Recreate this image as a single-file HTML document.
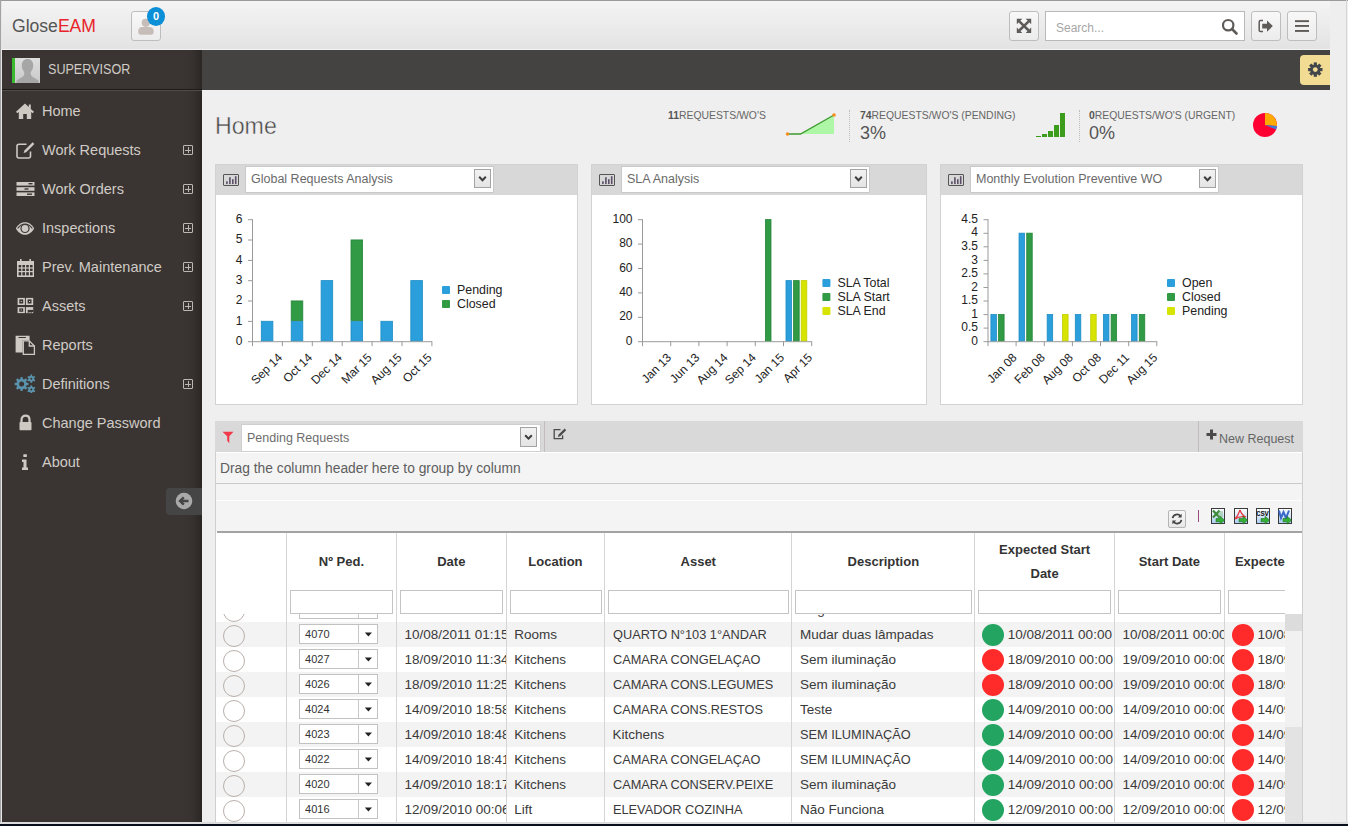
<!DOCTYPE html>
<html><head><meta charset="utf-8">
<style>
*{box-sizing:border-box;margin:0;padding:0}
html,body{width:1348px;height:826px;overflow:hidden}
body{position:relative;background:#efefef;font-family:"Liberation Sans",sans-serif;color:#444}
.abs{position:absolute}
#frameTop{left:0;top:0;width:1348px;height:1px;background:#9a9a9a}
#frameL1{left:0;top:0;width:1px;height:824px;background:#a3a3a3}
#frameL2{left:1px;top:1px;width:1px;height:822px;background:#e6e6e6}
#frameR{left:1346px;top:0;width:1px;height:824px;background:#d6d6d6}
#frameB1{left:0;top:822px;width:1348px;height:2px;background:#dcdcdc}
#frameB2{left:0;top:824px;width:1348px;height:2px;background:#0a0f1c}
#header{left:2px;top:1px;width:1328px;height:49px;background:linear-gradient(#f4f4f4,#e3e3e3);border-bottom:1px solid #f3f3f3}
#logo{left:9.5px;top:14px;font-size:18.9px;color:#555;letter-spacing:0;transform:scaleX(0.93);transform-origin:0 0;white-space:nowrap}
#logo span{color:#e8232a}
.hbtn{position:absolute;width:30px;height:30px;border:1px solid #bdbdbd;border-radius:3px;background:linear-gradient(#f8f8f8,#ececec)}
#topbar{left:202px;top:50px;width:1128px;height:40px;background:#454341}
#sidebar{left:2px;top:50px;width:200px;height:772px;background:#3a3532;box-shadow:inset -14px 0 12px -10px rgba(0,0,0,.35)}
#userbar{left:2px;top:50px;width:200px;height:41px;border-bottom:1px solid #4f4c4a}
#userbar:after{content:"";position:absolute;left:0;top:39px;width:200px;height:1px;background:#1c1917}
.mi{position:absolute;left:0;width:200px;height:39px;color:#d0cbc6;font-size:14.5px}
.mi .t{position:absolute;left:40px;top:12px}
.mi svg.ic{position:absolute;left:13px;top:11px}
.mi .plus{position:absolute;left:181px;top:15px;width:9.5px;height:9.5px;border:1px solid #bdb7b2;border-radius:1px}
.mi .plus:before{content:"";position:absolute;left:1px;top:3.5px;width:6px;height:1px;background:#bdb7b2}
.mi .plus:after{content:"";position:absolute;left:3.5px;top:1px;width:1px;height:6px;background:#bdb7b2}

.panel{position:absolute;background:#fff;border:1px solid #d2d2d2}
.phead{position:absolute;left:0;top:0;right:0;height:30px;background:#d8d8d8}
.sel{position:absolute;background:#fff;border:1px solid #c9c9c9;font-size:12.5px;color:#6a6a6a}
.sel .tx{position:absolute;left:5px;top:5px;white-space:nowrap}
.ddb{position:absolute;width:17px;height:19px;border:1px solid #a3a3a3;background:linear-gradient(#f2f2f2,#e4e4e4)}
.chi{position:absolute;left:7px;top:9px;width:15.5px;height:12px;border:1.1px solid #555;border-radius:1px}
.kpi{position:absolute;font-size:10.4px;color:#666;white-space:nowrap}
.kpi b{color:#555}
.kpv{position:absolute;font-size:18px;color:#555}
.hdt{font-size:13px;font-weight:bold;color:#333;text-align:center}
.cell{font-size:13.5px;color:#3a3a3a;white-space:nowrap;overflow:hidden}
</style></head><body>
<div id="frameTop" class="abs"></div>
<div id="header" class="abs">
  <div id="logo" class="abs">Glose<span>EAM</span></div>
</div>
<div class="hbtn" style="left:131px;top:11px;width:30px;height:30px">
  <svg width="28" height="28" style="position:absolute;left:0;top:0" viewBox="0 0 28 28"><circle cx="13.8" cy="10.8" r="4.1" fill="#c6bdb8"/><path d="M6.2 19.5 C6.2 16.5 7.8 15.1 10.5 15.1 H17.2 C20 15.1 21.7 16.5 21.7 19.5 C21.7 21.8 20.8 22.8 19 22.8 H9 C7.2 22.8 6.2 21.8 6.2 19.5 Z" fill="#c6bdb8"/></svg>
</div>
<div class="abs" style="left:147px;top:7px;width:18px;height:18.5px;border-radius:50%;background:#0b8fd6;color:#fff;font-size:11px;font-weight:bold;text-align:center;line-height:18.5px">0</div>
<div class="hbtn" style="left:1009px;top:11px;width:30px;height:30px">
  <svg width="28" height="28" viewBox="0 0 28 28" style="position:absolute;left:0;top:0"><g fill="#5e5a58"><path d="M6.8 6.8 H12.3 L6.8 12.3 Z"/><path d="M21.2 6.8 H15.7 L21.2 12.3 Z"/><path d="M6.8 21 H12.3 L6.8 15.5 Z"/><path d="M21.2 21 H15.7 L21.2 15.5 Z"/></g><path d="M9.3 9.3 L18.7 18.5 M18.7 9.3 L9.3 18.5" stroke="#5e5a58" stroke-width="2.5"/></svg>
</div>
<div class="abs" style="left:1045px;top:11px;width:200px;height:30px;background:#fff;border:1px solid #b9b9b9">
  <div class="abs" style="left:10px;top:9px;font-size:12px;color:#a7a7a7">Search...</div>
  <svg width="18" height="18" viewBox="0 0 18 18" style="position:absolute;left:175px;top:6px"><circle cx="7.2" cy="7.2" r="5.2" fill="none" stroke="#5e5a58" stroke-width="2.2"/><path d="M11 11 L15.5 15.5" stroke="#5e5a58" stroke-width="2.6" stroke-linecap="round"/></svg>
</div>
<div class="hbtn" style="left:1251px;top:11px;width:30px;height:30px">
  <svg width="28" height="28" viewBox="0 0 28 28" style="position:absolute;left:0;top:0"><path d="M11 8.6 H8.6 C7.7 8.6 7.2 9.1 7.2 10 V18.2 C7.2 19.1 7.7 19.6 8.6 19.6 H11" fill="none" stroke="#5e5a58" stroke-width="1.5"/><path d="M10.2 11.8 H15 V8.4 L20.8 14.1 L15 19.8 V16.4 H10.2 Z" fill="#5e5a58"/></svg>
</div>
<div class="hbtn" style="left:1287px;top:11px;width:30px;height:30px">
  <svg width="28" height="28" viewBox="0 0 28 28" style="position:absolute;left:0;top:0"><g fill="#5e5a58"><rect x="7" y="8.2" width="14" height="1.9"/><rect x="7" y="13" width="14" height="1.9"/><rect x="7" y="18" width="14" height="1.9"/></g></svg>
</div>
<div id="rstrip" class="abs" style="left:1330px;top:1px;width:16px;height:821px;background:#eeeeee"></div>
<div id="topbar" class="abs"></div>
<div id="sidebar" class="abs"></div>
<div id="userbar" class="abs">
  <div class="abs" style="left:10px;top:8px;width:3px;height:25px;background:#3cb92f"></div>
  <div class="abs" style="left:13px;top:8px;width:25px;height:25px;background:linear-gradient(#dedede,#c9c9c9);overflow:hidden">
    <svg width="25" height="25" viewBox="0 0 25 25"><path d="M12.5 1 C16 1 18.2 3.5 18.2 7.5 C18.2 10.5 17 12.5 15.8 14 C15.5 15.5 15.8 17.5 17 18.5 L23.5 22.5 V25 H1.5 V22.5 L8 18.5 C9.2 17.5 9.5 15.5 9.2 14 C8 12.5 6.8 10.5 6.8 7.5 C6.8 3.5 9 1 12.5 1 Z" fill="#a6a6a6"/></svg>
  </div>
  <div class="abs" style="left:46px;top:11px;font-size:14.3px;color:#d0cbc6;transform:scaleX(0.88);transform-origin:0 0">SUPERVISOR</div>
</div>
<div class="abs" style="left:2px;top:91px;width:200px;height:420px">
<div class="mi" style="top:0px"><svg class="ic" width="20" height="18" viewBox="0 0 20 18"><path d="M10 1.5 L1 9.8 L2.3 11.2 L3.8 9.9 V17 H8.2 V12 H11.8 V17 H16.2 V9.9 L17.7 11.2 L19 9.8 L15.8 6.9 V2.5 H13.8 V5.1 Z" fill="#cfc9c4"/></svg><div class="t">Home</div></div>
<div class="mi" style="top:39px"><svg class="ic" width="20" height="18" viewBox="0 0 20 18"><path d="M11.5 3.3 H4 C2.8 3.3 2 4.1 2 5.3 V15 C2 16.2 2.8 17 4 17 H13.5 C14.7 17 15.5 16.2 15.5 15 V10.5" fill="none" stroke="#cfc9c4" stroke-width="1.6"/><path d="M17.6 1.2 L19.4 3 L11.2 11.2 L8.6 12 L9.4 9.4 Z" fill="#cfc9c4"/></svg><div class="t">Work Requests</div><div class="plus"></div></div>
<div class="mi" style="top:78px"><svg class="ic" width="20" height="18" viewBox="0 0 20 18"><g fill="#cfc9c4"><rect x="1.5" y="2" width="18" height="3.6"/><rect x="1.5" y="7.2" width="18" height="3.6"/><rect x="1.5" y="12.4" width="18" height="3.6"/></g><g fill="#3a3532"><rect x="13.5" y="3" width="4" height="1.4"/><rect x="9.5" y="8.3" width="4" height="1.4"/><rect x="12" y="13.5" width="5" height="1.4"/></g></svg><div class="t">Work Orders</div><div class="plus"></div></div>
<div class="mi" style="top:117px"><svg class="ic" width="20" height="18" viewBox="0 0 20 18"><path d="M0.8 9.5 C3.5 4.8 6.8 3.3 10 3.3 C13.2 3.3 16.5 4.8 19.2 9.5 C16.5 14.2 13.2 15.7 10 15.7 C6.8 15.7 3.5 14.2 0.8 9.5 Z" fill="#cfc9c4"/><circle cx="10" cy="9.5" r="4.6" fill="#3a3532"/><circle cx="10" cy="9.5" r="3.4" fill="#cfc9c4"/><path d="M2.6 9.5 C5 6 7.5 5 10 5 C12.5 5 15 6 17.4 9.5" fill="none" stroke="#3a3532" stroke-width="1.1"/></svg><div class="t">Inspections</div><div class="plus"></div></div>
<div class="mi" style="top:156px"><svg class="ic" width="20" height="20" viewBox="0 0 20 20" style="top:10.5px"><rect x="2" y="3" width="17" height="16" fill="#cfc9c4"/><g fill="#3a3532"><rect x="3.6" y="7" width="2.6" height="2.4"/><rect x="7.4" y="7" width="2.6" height="2.4"/><rect x="11.2" y="7" width="2.6" height="2.4"/><rect x="15" y="7" width="2.6" height="2.4"/><rect x="3.6" y="10.6" width="2.6" height="2.4"/><rect x="7.4" y="10.6" width="2.6" height="2.4"/><rect x="11.2" y="10.6" width="2.6" height="2.4"/><rect x="15" y="10.6" width="2.6" height="2.4"/><rect x="3.6" y="14.2" width="2.6" height="3.2"/><rect x="7.4" y="14.2" width="2.6" height="3.2"/><rect x="11.2" y="14.2" width="2.6" height="3.2"/><rect x="15" y="14.2" width="2.6" height="3.2"/></g><g fill="#cfc9c4"><rect x="5" y="1" width="1.6" height="3"/><rect x="14.4" y="1" width="1.6" height="3"/></g></svg><div class="t">Prev. Maintenance</div><div class="plus"></div></div>
<div class="mi" style="top:195px"><svg class="ic" width="20" height="18" viewBox="0 0 20 18"><g fill="#cfc9c4"><rect x="2.6" y="0.9" width="7.3" height="7.1"/><rect x="10.9" y="0.9" width="7.3" height="7.1"/><rect x="2.6" y="10.1" width="7.3" height="6"/><rect x="10.9" y="10.1" width="7.3" height="6"/></g><g fill="#3a3532"><rect x="4.3" y="2.4" width="3.9" height="4.1"/><rect x="12.6" y="2.4" width="3.9" height="4.1"/><rect x="4.3" y="11.4" width="3.9" height="3.4"/><rect x="12.7" y="12.9" width="5.5" height="3.2"/></g><g fill="#cfc9c4"><rect x="5.7" y="4" width="1.1" height="1"/><rect x="14" y="4" width="1.1" height="1"/><rect x="5.7" y="12.6" width="1.1" height="1"/><rect x="13.6" y="15" width="1" height="1.1"/><rect x="15.4" y="15" width="1" height="1.1"/><rect x="17.1" y="15" width="1" height="1.1"/></g></svg><div class="t">Assets</div><div class="plus"></div></div>
<div class="mi" style="top:234px"><svg class="ic" width="22" height="24" viewBox="0 0 22 24" style="top:8px"><path d="M0.6 2.8 H14.6 V7.2 H7.7 V19.5 H0.6 Z" fill="#cfc9c4"/><rect x="3.4" y="3.9" width="7.6" height="1" rx="0.5" fill="#3a3532"/><path d="M8.3 7.8 H14.3 L19.4 13 V21.4 H8.3 Z" fill="none" stroke="#cfc9c4" stroke-width="1.3"/><path d="M14.3 7.8 V13 H19.4" fill="none" stroke="#cfc9c4" stroke-width="1.3"/></svg><div class="t">Reports</div></div>
<div class="mi" style="top:273px"><svg class="ic" width="22" height="20" viewBox="0 0 22 20" style="left:12px;top:9px"><g transform="translate(7.60 11.00)"><circle r="5.20" fill="#5a93ad"/><rect x="-1.15" y="-6.90" width="2.30" height="2.50" fill="#5a93ad" transform="rotate(0.0)"/><rect x="-1.15" y="-6.90" width="2.30" height="2.50" fill="#5a93ad" transform="rotate(45.0)"/><rect x="-1.15" y="-6.90" width="2.30" height="2.50" fill="#5a93ad" transform="rotate(90.0)"/><rect x="-1.15" y="-6.90" width="2.30" height="2.50" fill="#5a93ad" transform="rotate(135.0)"/><rect x="-1.15" y="-6.90" width="2.30" height="2.50" fill="#5a93ad" transform="rotate(180.0)"/><rect x="-1.15" y="-6.90" width="2.30" height="2.50" fill="#5a93ad" transform="rotate(225.0)"/><rect x="-1.15" y="-6.90" width="2.30" height="2.50" fill="#5a93ad" transform="rotate(270.0)"/><rect x="-1.15" y="-6.90" width="2.30" height="2.50" fill="#5a93ad" transform="rotate(315.0)"/><circle r="2.50" fill="#3a3532"/></g><g transform="translate(17.30 5.70)"><circle r="2.90" fill="#5a93ad"/><rect x="-0.80" y="-4.20" width="1.60" height="2.10" fill="#5a93ad" transform="rotate(0.0)"/><rect x="-0.80" y="-4.20" width="1.60" height="2.10" fill="#5a93ad" transform="rotate(60.0)"/><rect x="-0.80" y="-4.20" width="1.60" height="2.10" fill="#5a93ad" transform="rotate(120.0)"/><rect x="-0.80" y="-4.20" width="1.60" height="2.10" fill="#5a93ad" transform="rotate(180.0)"/><rect x="-0.80" y="-4.20" width="1.60" height="2.10" fill="#5a93ad" transform="rotate(240.0)"/><rect x="-0.80" y="-4.20" width="1.60" height="2.10" fill="#5a93ad" transform="rotate(300.0)"/><circle r="1.00" fill="#3a3532"/></g><g transform="translate(17.30 16.50)"><circle r="2.90" fill="#5a93ad"/><rect x="-0.80" y="-4.20" width="1.60" height="2.10" fill="#5a93ad" transform="rotate(0.0)"/><rect x="-0.80" y="-4.20" width="1.60" height="2.10" fill="#5a93ad" transform="rotate(60.0)"/><rect x="-0.80" y="-4.20" width="1.60" height="2.10" fill="#5a93ad" transform="rotate(120.0)"/><rect x="-0.80" y="-4.20" width="1.60" height="2.10" fill="#5a93ad" transform="rotate(180.0)"/><rect x="-0.80" y="-4.20" width="1.60" height="2.10" fill="#5a93ad" transform="rotate(240.0)"/><rect x="-0.80" y="-4.20" width="1.60" height="2.10" fill="#5a93ad" transform="rotate(300.0)"/><circle r="1.00" fill="#3a3532"/></g></svg><div class="t">Definitions</div><div class="plus"></div></div>
<div class="mi" style="top:312px"><svg class="ic" width="20" height="18" viewBox="0 0 20 18" style="left:14px"><path d="M5.5 8 V6 C5.5 3.3 7.3 1.7 9.5 1.7 C11.7 1.7 13.5 3.3 13.5 6 V8" fill="none" stroke="#cfc9c4" stroke-width="2.2"/><rect x="3.5" y="8" width="12" height="8.2" rx="0.8" fill="#cfc9c4"/></svg><div class="t">Change Password</div></div>
<div class="mi" style="top:351px"><svg class="ic" width="20" height="18" viewBox="0 0 20 18" style="left:14px"><g fill="#cfc9c4"><rect x="7.3" y="1.3" width="3.6" height="2.6" rx="0.4"/><path d="M6 6.5 H10.5 V14.5 H12 V17 H6 V14.5 H7.5 V9 H6 Z"/></g></svg><div class="t">About</div></div>
</div>
<div class="abs" style="left:166px;top:488px;width:36px;height:27px;background:#454545;border-radius:4px 0 0 4px">
<svg width="36" height="27" viewBox="0 0 36 27"><circle cx="18" cy="13" r="8.3" fill="#a9a9a9"/><path d="M22.5 13 H14.5 M17.8 9.3 L14 13 L17.8 16.7" fill="none" stroke="#454545" stroke-width="2.4"/></svg></div>

<div class="abs" style="left:1300px;top:55px;width:30px;height:30px;background:#f2dc94;border-radius:4px 0 0 4px">
  <svg width="30" height="30" viewBox="0 0 30 30" style="position:absolute;left:0;top:0"><g fill="#42454a" transform="translate(15.3 14.6)"><circle r="5.2"/><g id="teeth"><rect x="-1.6" y="-7.2" width="3.2" height="3"/><rect x="-1.6" y="4.2" width="3.2" height="3"/><rect x="-7.2" y="-1.6" width="3" height="3.2"/><rect x="4.2" y="-1.6" width="3" height="3.2"/></g><g transform="rotate(45)"><rect x="-1.6" y="-7.2" width="3.2" height="3"/><rect x="-1.6" y="4.2" width="3.2" height="3"/><rect x="-7.2" y="-1.6" width="3" height="3.2"/><rect x="4.2" y="-1.6" width="3" height="3.2"/></g></g><circle cx="15.3" cy="14.6" r="2.4" fill="#f2dc94"/></svg>
</div>

<div class="abs" style="left:214.8px;top:112px;font-size:24px;color:#444;font-weight:normal;-webkit-text-stroke:0.45px #efefef;transform:scaleX(0.965);transform-origin:0 0">Home</div>
<div class="kpi" style="left:668px;top:110px"><b>11</b>REQUESTS/WO'S</div>
<svg class="abs" style="left:780px;top:108px" width="60" height="32" viewBox="780 108 60 32"><path d="M800.5 134 L834 115 V134 Z" fill="#adf7a6"/><path d="M787.5 134 H800.5 L834 115" fill="none" stroke="#3d9a2e" stroke-width="1.3"/><circle cx="787.5" cy="134" r="1.8" fill="#f78c1f"/><circle cx="834" cy="115" r="1.8" fill="#f78c1f"/></svg>
<div class="abs" style="left:849px;top:110px;width:0;height:32px;border-left:1px dotted #bdbdbd"></div>
<div class="kpi" style="left:860px;top:110px"><b>74</b>REQUESTS/WO'S (PENDING)</div>
<div class="kpv" style="left:860px;top:123px">3%</div>
<svg class="abs" style="left:1030px;top:108px" width="40" height="32" viewBox="1030 108 40 32"><g fill="#3c9d1c"><rect x="1036" y="136" width="5" height="1"/><rect x="1042" y="134" width="5" height="3"/><rect x="1048" y="131" width="5" height="6"/><rect x="1054" y="125" width="5" height="12"/><rect x="1060" y="113" width="5" height="24"/></g></svg>
<div class="abs" style="left:1079px;top:110px;width:0;height:32px;border-left:1px dotted #bdbdbd"></div>
<div class="kpi" style="left:1089px;top:110px"><b>0</b>REQUESTS/WO'S (URGENT)</div>
<div class="kpv" style="left:1089px;top:123px">0%</div>
<svg class="abs" style="left:1250px;top:110px" width="30" height="30" viewBox="0 0 30 30"><circle cx="15" cy="15" r="12" fill="#ff0033"/><path d="M15 15 V3 A12 12 0 0 1 26.95 16.05 Z" fill="#ffaa00"/><path d="M15 15 L26.95 16.05 A12 12 0 0 1 26.12 19.5 Z" fill="#3b7dd8"/></svg>
<div class="panel" style="left:215px;top:164px;width:363px;height:241px"><div class="phead"><div class="chi"><svg width="14" height="10" viewBox="0 0 14 10" style="position:absolute;left:0;top:0"><g fill="#5a4f66"><rect x="2.1" y="6.3" width="1.6" height="2.8"/><rect x="5.1" y="2.2" width="1.6" height="6.9"/><rect x="8" y="4.2" width="1.6" height="4.9"/><rect x="10.9" y="1.2" width="1.6" height="7.9"/></g></svg></div><div class="sel" style="left:29px;top:1px;width:249px;height:27px"><div class="tx">Global Requests Analysis</div><div class="ddb" style="left:228px;top:2px"><svg width="15" height="17" viewBox="0 0 15 17" style="position:absolute;left:0;top:0"><path d="M4.2 6.8 L7.5 10.2 L10.8 6.8" fill="none" stroke="#3d3d3d" stroke-width="2"/></svg></div></div></div></div>
<div class="panel" style="left:591px;top:164px;width:336px;height:241px"><div class="phead"><div class="chi"><svg width="14" height="10" viewBox="0 0 14 10" style="position:absolute;left:0;top:0"><g fill="#5a4f66"><rect x="2.1" y="6.3" width="1.6" height="2.8"/><rect x="5.1" y="2.2" width="1.6" height="6.9"/><rect x="8" y="4.2" width="1.6" height="4.9"/><rect x="10.9" y="1.2" width="1.6" height="7.9"/></g></svg></div><div class="sel" style="left:29px;top:1px;width:249px;height:27px"><div class="tx">SLA Analysis</div><div class="ddb" style="left:228px;top:2px"><svg width="15" height="17" viewBox="0 0 15 17" style="position:absolute;left:0;top:0"><path d="M4.2 6.8 L7.5 10.2 L10.8 6.8" fill="none" stroke="#3d3d3d" stroke-width="2"/></svg></div></div></div></div>
<div class="panel" style="left:940px;top:164px;width:363px;height:241px"><div class="phead"><div class="chi"><svg width="14" height="10" viewBox="0 0 14 10" style="position:absolute;left:0;top:0"><g fill="#5a4f66"><rect x="2.1" y="6.3" width="1.6" height="2.8"/><rect x="5.1" y="2.2" width="1.6" height="6.9"/><rect x="8" y="4.2" width="1.6" height="4.9"/><rect x="10.9" y="1.2" width="1.6" height="7.9"/></g></svg></div><div class="sel" style="left:29px;top:1px;width:249px;height:27px"><div class="tx">Monthly Evolution Preventive WO</div><div class="ddb" style="left:228px;top:2px"><svg width="15" height="17" viewBox="0 0 15 17" style="position:absolute;left:0;top:0"><path d="M4.2 6.8 L7.5 10.2 L10.8 6.8" fill="none" stroke="#3d3d3d" stroke-width="2"/></svg></div></div></div></div>
<!--GRID--><div class="abs" style="left:215px;top:421px;width:1088px;height:401px;background:#fff;border-left:1px solid #cfcfcf;border-right:1px solid #cfcfcf"></div><div class="abs" style="left:215px;top:421px;width:1088px;height:31px;background:#d9d9d9"></div><svg class="abs" style="left:222px;top:431px" width="13" height="13" viewBox="0 0 13 13"><path d="M0.5 0.8 H11.5 L7.3 5.2 V12.2 L5.2 9.8 V5.2 Z" fill="#f2394a"/></svg><div class="sel" style="left:241px;top:424px;width:300px;height:28px;border-color:#cfcfcf"><div class="tx" style="left:5px;top:6px;font-size:12.5px;color:#6d6d6d">Pending Requests</div><div class="ddb" style="left:278px;top:2px;width:17px;height:20px"><svg width="15" height="18" viewBox="0 0 15 18" style="position:absolute;left:0;top:0"><path d="M4.2 7.2 L7.5 10.6 L10.8 7.2" fill="none" stroke="#3d3d3d" stroke-width="2"/></svg></div></div><div class="abs" style="left:544px;top:421px;width:1px;height:31px;background:#c3bcbc"></div><svg class="abs" style="left:552px;top:428px" width="16" height="13" viewBox="0 0 16 13"><path d="M8.5 1.7 H2.2 V10.7 H10.6 V7.3" fill="none" stroke="#4b4b4b" stroke-width="1.3"/><path d="M12.6 0.6 L14.2 2.2 L8.2 8.2 L5.9 8.9 L6.6 6.6 Z" fill="#4b4b4b"/></svg><div class="abs" style="left:1198px;top:421px;width:1px;height:31px;background:#c3bcbc"></div><svg class="abs" style="left:1206px;top:429px" width="11" height="11" viewBox="0 0 11 11"><path d="M4 0.5 H7 V4 H10.5 V7 H7 V10.5 H4 V7 H0.5 V4 H4 Z" fill="#4a4a4a"/></svg><div class="abs" style="left:1219px;top:431.5px;font-size:12.5px;color:#666">New Request</div><div class="abs" style="left:216px;top:452px;width:1086px;height:80px;background:#f4f4f4;border-top:1px solid #fff"></div><div class="abs" style="left:220px;top:461px;font-size:13.8px;color:#5e5e5e">Drag the column header here to group by column</div><div class="abs" style="left:216px;top:483px;width:1086px;height:1px;background:#c9c9c9"></div><div class="abs" style="left:216px;top:500px;width:1086px;height:1px;background:#fdfdfd"></div><div class="abs" style="left:1168px;top:510px;width:18px;height:18px;border:1px solid #b5b5b5;border-radius:2px;background:linear-gradient(#f8f8f8,#e8e8e8)"><svg width="16" height="16" viewBox="0 0 16 16" style="position:absolute;left:0;top:0"><path d="M3.6 7.2 A4.5 4.5 0 0 1 11.6 5.2" fill="none" stroke="#444" stroke-width="1.7"/><path d="M12.6 2.8 V6.6 H8.8 Z" fill="#444"/><path d="M12.4 8.8 A4.5 4.5 0 0 1 4.4 10.8" fill="none" stroke="#444" stroke-width="1.7"/><path d="M3.4 13.2 V9.4 H7.2 Z" fill="#444"/></svg></div><div class="abs" style="left:1198px;top:510px;width:1px;height:12px;background:#9a4a7c"></div><svg class="abs" style="left:1210px;top:508px" width="16" height="17" viewBox="0 0 16 17"><defs><linearGradient id="egx" x1="0" y1="0" x2="0" y2="1"><stop offset="0" stop-color="#fff"/><stop offset="1" stop-color="#a9cdf2"/></linearGradient></defs><rect x="1.5" y="0.5" width="13" height="15" fill="url(#egx)" stroke="#3a3a3a" stroke-width="1"/><path d="M3 2.5 L9.5 9.5 M9.5 2.5 L3 9.5" stroke="#3d8a3a" stroke-width="2.2"/><path d="M8 4 H13 M8 6 H13 M8 8 H13" stroke="#6aa86a" stroke-width="0.8"/><path d="M6 10.6 H10 V8.3 L14.6 12.2 L10 16.1 V13.8 H6 Z" fill="#35b036" stroke="#1d6e1d" stroke-width="0.6"/></svg><svg class="abs" style="left:1233px;top:508px" width="16" height="17" viewBox="0 0 16 17"><defs><linearGradient id="egp" x1="0" y1="0" x2="0" y2="1"><stop offset="0" stop-color="#fff"/><stop offset="1" stop-color="#a9cdf2"/></linearGradient></defs><rect x="1.5" y="0.5" width="13" height="15" fill="url(#egp)" stroke="#3a3a3a" stroke-width="1"/><path d="M7 2 C6 5 5 8 2 11 M7 2 C8 5 10 8 13 9 M2 11 C5 9 9 8 13 9" fill="none" stroke="#e8343a" stroke-width="1.2"/><path d="M6 10.6 H10 V8.3 L14.6 12.2 L10 16.1 V13.8 H6 Z" fill="#35b036" stroke="#1d6e1d" stroke-width="0.6"/></svg><svg class="abs" style="left:1255px;top:508px" width="16" height="17" viewBox="0 0 16 17"><defs><linearGradient id="egc" x1="0" y1="0" x2="0" y2="1"><stop offset="0" stop-color="#fff"/><stop offset="1" stop-color="#a9cdf2"/></linearGradient></defs><rect x="1.5" y="0.5" width="13" height="15" fill="url(#egc)" stroke="#3a3a3a" stroke-width="1"/><text x="7.5" y="7.6" text-anchor="middle" font-size="7" font-weight="bold" font-family="Liberation Mono, monospace" fill="#111">CSV</text><path d="M6 10.6 H10 V8.3 L14.6 12.2 L10 16.1 V13.8 H6 Z" fill="#35b036" stroke="#1d6e1d" stroke-width="0.6"/></svg><svg class="abs" style="left:1277px;top:508px" width="16" height="17" viewBox="0 0 16 17"><defs><linearGradient id="egw" x1="0" y1="0" x2="0" y2="1"><stop offset="0" stop-color="#fff"/><stop offset="1" stop-color="#a9cdf2"/></linearGradient></defs><rect x="1.5" y="0.5" width="13" height="15" fill="url(#egw)" stroke="#3a3a3a" stroke-width="1"/><path d="M2 2.5 L4 10 L6.5 4 L9 10 L12 2.5" fill="none" stroke="#3a68c8" stroke-width="2"/><path d="M6 10.6 H10 V8.3 L14.6 12.2 L10 16.1 V13.8 H6 Z" fill="#35b036" stroke="#1d6e1d" stroke-width="0.6"/></svg><div class="abs" style="left:217px;top:531px;width:1085px;height:2px;background:#a3a3a3"></div><div class="abs" style="left:216px;top:533px;width:1069px;height:81px;background:#fff;overflow:hidden"><div class="abs" style="left:70.0px;top:0;width:1px;height:81px;background:#d5d5d5"></div><div class="abs hdt" style="left:70.5px;top:17px;width:109.9px;line-height:24px;white-space:nowrap">Nº Ped.</div><div class="abs" style="left:74.0px;top:57px;width:103.4px;height:24px;border:1px solid #c4c4c4;background:#fff"></div><div class="abs" style="left:179.9px;top:0;width:1px;height:81px;background:#d5d5d5"></div><div class="abs hdt" style="left:180.4px;top:17px;width:109.9px;line-height:24px;white-space:nowrap">Date</div><div class="abs" style="left:183.9px;top:57px;width:103.4px;height:24px;border:1px solid #c4c4c4;background:#fff"></div><div class="abs" style="left:289.8px;top:0;width:1px;height:81px;background:#d5d5d5"></div><div class="abs hdt" style="left:290.3px;top:17px;width:98.3px;line-height:24px;white-space:nowrap">Location</div><div class="abs" style="left:293.8px;top:57px;width:91.8px;height:24px;border:1px solid #c4c4c4;background:#fff"></div><div class="abs" style="left:388.1px;top:0;width:1px;height:81px;background:#d5d5d5"></div><div class="abs hdt" style="left:388.6px;top:17px;width:187.3px;line-height:24px;white-space:nowrap">Asset</div><div class="abs" style="left:392.1px;top:57px;width:180.8px;height:24px;border:1px solid #c4c4c4;background:#fff"></div><div class="abs" style="left:575.4px;top:0;width:1px;height:81px;background:#d5d5d5"></div><div class="abs hdt" style="left:575.9px;top:17px;width:182.9px;line-height:24px;white-space:nowrap">Description</div><div class="abs" style="left:579.4px;top:57px;width:176.4px;height:24px;border:1px solid #c4c4c4;background:#fff"></div><div class="abs" style="left:758.3px;top:0;width:1px;height:81px;background:#d5d5d5"></div><div class="abs hdt" style="left:758.8px;top:5px;width:139.6px;line-height:24px">Expected Start<br>Date</div><div class="abs" style="left:762.3px;top:57px;width:133.1px;height:24px;border:1px solid #c4c4c4;background:#fff"></div><div class="abs" style="left:897.9px;top:0;width:1px;height:81px;background:#d5d5d5"></div><div class="abs hdt" style="left:898.4px;top:17px;width:110.0px;line-height:24px;white-space:nowrap">Start Date</div><div class="abs" style="left:901.9px;top:57px;width:103.5px;height:24px;border:1px solid #c4c4c4;background:#fff"></div><div class="abs" style="left:1007.9px;top:0;width:1px;height:81px;background:#d5d5d5"></div><div class="abs hdt" style="left:1018.9px;top:17px;line-height:24px;white-space:nowrap">Expected End</div><div class="abs" style="left:1011.9px;top:57px;width:103.1px;height:24px;border:1px solid #c4c4c4;background:#fff"></div></div><div class="abs" style="left:1285px;top:533px;width:17px;height:81px;background:#fff"></div><div class="abs" style="left:1285px;top:614px;width:17px;height:17px;background:#dcdcdc"></div><div class="abs" style="left:1285px;top:631px;width:17px;height:96px;background:#f1f1f1"></div><div class="abs" style="left:1285px;top:727px;width:17px;height:95px;background:#e3e3e3"></div><div class="abs" style="left:216px;top:614px;width:1069px;height:208px;overflow:hidden"><div class="abs row" style="left:0;top:-17px;width:1069px;height:25px;background:#fff"><div class="abs" style="left:6.5px;top:2.8px;width:22px;height:22px;border:1px solid #b9b0ac;border-radius:50%"></div><div class="abs" style="left:83.1px;top:2px;width:79px;height:20px;border:1px solid #c2c2c2;background:#fff"><div class="abs" style="left:5px;top:3px;font-size:11px;color:#333">4071</div><div class="abs" style="left:58px;top:0;width:1px;height:18px;background:#c8c8c8"></div><svg class="abs" style="left:64px;top:7px" width="9" height="5" viewBox="0 0 9 5"><path d="M0.8 0.5 H8 L4.4 4.5 Z" fill="#222"/></svg></div><div class="abs cell" style="left:583.9px;top:5px;width:174.4px">Regar</div></div><div class="abs row" style="left:0;top:8px;width:1069px;height:25px;background:#f3f3f3"><div class="abs" style="left:6.5px;top:2.8px;width:22px;height:22px;border:1px solid #b9b0ac;border-radius:50%"></div><div class="abs" style="left:83.1px;top:2px;width:79px;height:20px;border:1px solid #c2c2c2;background:#fff"><div class="abs" style="left:5px;top:3px;font-size:11px;color:#333">4070</div><div class="abs" style="left:58px;top:0;width:1px;height:18px;background:#c8c8c8"></div><svg class="abs" style="left:64px;top:7px" width="9" height="5" viewBox="0 0 9 5"><path d="M0.8 0.5 H8 L4.4 4.5 Z" fill="#222"/></svg></div><div class="abs cell" style="left:188.4px;top:5px;width:101.4px">10/08/2011 01:15</div><div class="abs cell" style="left:298.3px;top:5px;width:89.8px">Rooms</div><div class="abs cell" style="left:396.6px;top:5px;width:178.8px"><span style="display:inline-block;transform:scaleX(0.945);transform-origin:0 0">QUARTO N°103 1°ANDAR</span></div><div class="abs cell" style="left:583.9px;top:5px;width:174.4px">Mudar duas lâmpadas</div><div class="abs" style="left:766.0px;top:2px;width:22px;height:22px;border-radius:50%;background:#23a461"></div><div class="abs cell" style="left:791.8px;top:5px;width:106.1px">10/08/2011 00:00</div><div class="abs cell" style="left:906.4px;top:5px;width:101.5px">10/08/2011 00:00</div><div class="abs" style="left:1015.9px;top:2px;width:22px;height:22px;border-radius:50%;background:#ff2a2a"></div><div class="abs cell" style="left:1041.4px;top:5px;width:200.0px">10/08/2011 00:00</div></div><div class="abs row" style="left:0;top:33px;width:1069px;height:25px;background:#fff"><div class="abs" style="left:6.5px;top:2.8px;width:22px;height:22px;border:1px solid #b9b0ac;border-radius:50%"></div><div class="abs" style="left:83.1px;top:2px;width:79px;height:20px;border:1px solid #c2c2c2;background:#fff"><div class="abs" style="left:5px;top:3px;font-size:11px;color:#333">4027</div><div class="abs" style="left:58px;top:0;width:1px;height:18px;background:#c8c8c8"></div><svg class="abs" style="left:64px;top:7px" width="9" height="5" viewBox="0 0 9 5"><path d="M0.8 0.5 H8 L4.4 4.5 Z" fill="#222"/></svg></div><div class="abs cell" style="left:188.4px;top:5px;width:101.4px">18/09/2010 11:34</div><div class="abs cell" style="left:298.3px;top:5px;width:89.8px">Kitchens</div><div class="abs cell" style="left:396.6px;top:5px;width:178.8px"><span style="display:inline-block;transform:scaleX(0.945);transform-origin:0 0">CAMARA CONGELAÇAO</span></div><div class="abs cell" style="left:583.9px;top:5px;width:174.4px">Sem iluminação</div><div class="abs" style="left:766.0px;top:2px;width:22px;height:22px;border-radius:50%;background:#ff2a2a"></div><div class="abs cell" style="left:791.8px;top:5px;width:106.1px">18/09/2010 00:00</div><div class="abs cell" style="left:906.4px;top:5px;width:101.5px">19/09/2010 00:00</div><div class="abs" style="left:1015.9px;top:2px;width:22px;height:22px;border-radius:50%;background:#ff2a2a"></div><div class="abs cell" style="left:1041.4px;top:5px;width:200.0px">18/09/2010 00:00</div></div><div class="abs row" style="left:0;top:58px;width:1069px;height:25px;background:#f3f3f3"><div class="abs" style="left:6.5px;top:2.8px;width:22px;height:22px;border:1px solid #b9b0ac;border-radius:50%"></div><div class="abs" style="left:83.1px;top:2px;width:79px;height:20px;border:1px solid #c2c2c2;background:#fff"><div class="abs" style="left:5px;top:3px;font-size:11px;color:#333">4026</div><div class="abs" style="left:58px;top:0;width:1px;height:18px;background:#c8c8c8"></div><svg class="abs" style="left:64px;top:7px" width="9" height="5" viewBox="0 0 9 5"><path d="M0.8 0.5 H8 L4.4 4.5 Z" fill="#222"/></svg></div><div class="abs cell" style="left:188.4px;top:5px;width:101.4px">18/09/2010 11:25</div><div class="abs cell" style="left:298.3px;top:5px;width:89.8px">Kitchens</div><div class="abs cell" style="left:396.6px;top:5px;width:178.8px"><span style="display:inline-block;transform:scaleX(0.945);transform-origin:0 0">CAMARA CONS.LEGUMES</span></div><div class="abs cell" style="left:583.9px;top:5px;width:174.4px">Sem iluminação</div><div class="abs" style="left:766.0px;top:2px;width:22px;height:22px;border-radius:50%;background:#ff2a2a"></div><div class="abs cell" style="left:791.8px;top:5px;width:106.1px">18/09/2010 00:00</div><div class="abs cell" style="left:906.4px;top:5px;width:101.5px">19/09/2010 00:00</div><div class="abs" style="left:1015.9px;top:2px;width:22px;height:22px;border-radius:50%;background:#ff2a2a"></div><div class="abs cell" style="left:1041.4px;top:5px;width:200.0px">18/09/2010 00:00</div></div><div class="abs row" style="left:0;top:83px;width:1069px;height:25px;background:#fff"><div class="abs" style="left:6.5px;top:2.8px;width:22px;height:22px;border:1px solid #b9b0ac;border-radius:50%"></div><div class="abs" style="left:83.1px;top:2px;width:79px;height:20px;border:1px solid #c2c2c2;background:#fff"><div class="abs" style="left:5px;top:3px;font-size:11px;color:#333">4024</div><div class="abs" style="left:58px;top:0;width:1px;height:18px;background:#c8c8c8"></div><svg class="abs" style="left:64px;top:7px" width="9" height="5" viewBox="0 0 9 5"><path d="M0.8 0.5 H8 L4.4 4.5 Z" fill="#222"/></svg></div><div class="abs cell" style="left:188.4px;top:5px;width:101.4px">14/09/2010 18:58</div><div class="abs cell" style="left:298.3px;top:5px;width:89.8px">Kitchens</div><div class="abs cell" style="left:396.6px;top:5px;width:178.8px"><span style="display:inline-block;transform:scaleX(0.945);transform-origin:0 0">CAMARA CONS.RESTOS</span></div><div class="abs cell" style="left:583.9px;top:5px;width:174.4px">Teste</div><div class="abs" style="left:766.0px;top:2px;width:22px;height:22px;border-radius:50%;background:#23a461"></div><div class="abs cell" style="left:791.8px;top:5px;width:106.1px">14/09/2010 00:00</div><div class="abs cell" style="left:906.4px;top:5px;width:101.5px">14/09/2010 00:00</div><div class="abs" style="left:1015.9px;top:2px;width:22px;height:22px;border-radius:50%;background:#ff2a2a"></div><div class="abs cell" style="left:1041.4px;top:5px;width:200.0px">14/09/2010 00:00</div></div><div class="abs row" style="left:0;top:108px;width:1069px;height:25px;background:#f3f3f3"><div class="abs" style="left:6.5px;top:2.8px;width:22px;height:22px;border:1px solid #b9b0ac;border-radius:50%"></div><div class="abs" style="left:83.1px;top:2px;width:79px;height:20px;border:1px solid #c2c2c2;background:#fff"><div class="abs" style="left:5px;top:3px;font-size:11px;color:#333">4023</div><div class="abs" style="left:58px;top:0;width:1px;height:18px;background:#c8c8c8"></div><svg class="abs" style="left:64px;top:7px" width="9" height="5" viewBox="0 0 9 5"><path d="M0.8 0.5 H8 L4.4 4.5 Z" fill="#222"/></svg></div><div class="abs cell" style="left:188.4px;top:5px;width:101.4px">14/09/2010 18:48</div><div class="abs cell" style="left:298.3px;top:5px;width:89.8px">Kitchens</div><div class="abs cell" style="left:396.6px;top:5px;width:178.8px">Kitchens</div><div class="abs cell" style="left:583.9px;top:5px;width:174.4px"><span style="display:inline-block;transform:scaleX(0.945);transform-origin:0 0">SEM ILUMINAÇÃO</span></div><div class="abs" style="left:766.0px;top:2px;width:22px;height:22px;border-radius:50%;background:#23a461"></div><div class="abs cell" style="left:791.8px;top:5px;width:106.1px">14/09/2010 00:00</div><div class="abs cell" style="left:906.4px;top:5px;width:101.5px">14/09/2010 00:00</div><div class="abs" style="left:1015.9px;top:2px;width:22px;height:22px;border-radius:50%;background:#ff2a2a"></div><div class="abs cell" style="left:1041.4px;top:5px;width:200.0px">14/09/2010 00:00</div></div><div class="abs row" style="left:0;top:133px;width:1069px;height:25px;background:#fff"><div class="abs" style="left:6.5px;top:2.8px;width:22px;height:22px;border:1px solid #b9b0ac;border-radius:50%"></div><div class="abs" style="left:83.1px;top:2px;width:79px;height:20px;border:1px solid #c2c2c2;background:#fff"><div class="abs" style="left:5px;top:3px;font-size:11px;color:#333">4022</div><div class="abs" style="left:58px;top:0;width:1px;height:18px;background:#c8c8c8"></div><svg class="abs" style="left:64px;top:7px" width="9" height="5" viewBox="0 0 9 5"><path d="M0.8 0.5 H8 L4.4 4.5 Z" fill="#222"/></svg></div><div class="abs cell" style="left:188.4px;top:5px;width:101.4px">14/09/2010 18:41</div><div class="abs cell" style="left:298.3px;top:5px;width:89.8px">Kitchens</div><div class="abs cell" style="left:396.6px;top:5px;width:178.8px"><span style="display:inline-block;transform:scaleX(0.945);transform-origin:0 0">CAMARA CONGELAÇAO</span></div><div class="abs cell" style="left:583.9px;top:5px;width:174.4px"><span style="display:inline-block;transform:scaleX(0.945);transform-origin:0 0">SEM ILUMINAÇÃO</span></div><div class="abs" style="left:766.0px;top:2px;width:22px;height:22px;border-radius:50%;background:#23a461"></div><div class="abs cell" style="left:791.8px;top:5px;width:106.1px">14/09/2010 00:00</div><div class="abs cell" style="left:906.4px;top:5px;width:101.5px">14/09/2010 00:00</div><div class="abs" style="left:1015.9px;top:2px;width:22px;height:22px;border-radius:50%;background:#ff2a2a"></div><div class="abs cell" style="left:1041.4px;top:5px;width:200.0px">14/09/2010 00:00</div></div><div class="abs row" style="left:0;top:158px;width:1069px;height:25px;background:#f3f3f3"><div class="abs" style="left:6.5px;top:2.8px;width:22px;height:22px;border:1px solid #b9b0ac;border-radius:50%"></div><div class="abs" style="left:83.1px;top:2px;width:79px;height:20px;border:1px solid #c2c2c2;background:#fff"><div class="abs" style="left:5px;top:3px;font-size:11px;color:#333">4020</div><div class="abs" style="left:58px;top:0;width:1px;height:18px;background:#c8c8c8"></div><svg class="abs" style="left:64px;top:7px" width="9" height="5" viewBox="0 0 9 5"><path d="M0.8 0.5 H8 L4.4 4.5 Z" fill="#222"/></svg></div><div class="abs cell" style="left:188.4px;top:5px;width:101.4px">14/09/2010 18:17</div><div class="abs cell" style="left:298.3px;top:5px;width:89.8px">Kitchens</div><div class="abs cell" style="left:396.6px;top:5px;width:178.8px"><span style="display:inline-block;transform:scaleX(0.945);transform-origin:0 0">CAMARA CONSERV.PEIXE</span></div><div class="abs cell" style="left:583.9px;top:5px;width:174.4px">Sem iluminação</div><div class="abs" style="left:766.0px;top:2px;width:22px;height:22px;border-radius:50%;background:#23a461"></div><div class="abs cell" style="left:791.8px;top:5px;width:106.1px">14/09/2010 00:00</div><div class="abs cell" style="left:906.4px;top:5px;width:101.5px">14/09/2010 00:00</div><div class="abs" style="left:1015.9px;top:2px;width:22px;height:22px;border-radius:50%;background:#ff2a2a"></div><div class="abs cell" style="left:1041.4px;top:5px;width:200.0px">14/09/2010 00:00</div></div><div class="abs row" style="left:0;top:183px;width:1069px;height:25px;background:#fff"><div class="abs" style="left:6.5px;top:2.8px;width:22px;height:22px;border:1px solid #b9b0ac;border-radius:50%"></div><div class="abs" style="left:83.1px;top:2px;width:79px;height:20px;border:1px solid #c2c2c2;background:#fff"><div class="abs" style="left:5px;top:3px;font-size:11px;color:#333">4016</div><div class="abs" style="left:58px;top:0;width:1px;height:18px;background:#c8c8c8"></div><svg class="abs" style="left:64px;top:7px" width="9" height="5" viewBox="0 0 9 5"><path d="M0.8 0.5 H8 L4.4 4.5 Z" fill="#222"/></svg></div><div class="abs cell" style="left:188.4px;top:5px;width:101.4px">12/09/2010 00:06</div><div class="abs cell" style="left:298.3px;top:5px;width:89.8px">Lift</div><div class="abs cell" style="left:396.6px;top:5px;width:178.8px"><span style="display:inline-block;transform:scaleX(0.945);transform-origin:0 0">ELEVADOR COZINHA</span></div><div class="abs cell" style="left:583.9px;top:5px;width:174.4px">Não Funciona</div><div class="abs" style="left:766.0px;top:2px;width:22px;height:22px;border-radius:50%;background:#23a461"></div><div class="abs cell" style="left:791.8px;top:5px;width:106.1px">12/09/2010 00:00</div><div class="abs cell" style="left:906.4px;top:5px;width:101.5px">12/09/2010 00:00</div><div class="abs" style="left:1015.9px;top:2px;width:22px;height:22px;border-radius:50%;background:#ff2a2a"></div><div class="abs cell" style="left:1041.4px;top:5px;width:200.0px">12/09/2010 00:00</div></div><div class="abs" style="left:70.0px;top:0;width:1px;height:208px;background:#d5d5d5"></div><div class="abs" style="left:179.9px;top:0;width:1px;height:208px;background:#d5d5d5"></div><div class="abs" style="left:289.8px;top:0;width:1px;height:208px;background:#d5d5d5"></div><div class="abs" style="left:388.1px;top:0;width:1px;height:208px;background:#d5d5d5"></div><div class="abs" style="left:575.4px;top:0;width:1px;height:208px;background:#d5d5d5"></div><div class="abs" style="left:758.3px;top:0;width:1px;height:208px;background:#d5d5d5"></div><div class="abs" style="left:897.9px;top:0;width:1px;height:208px;background:#d5d5d5"></div><div class="abs" style="left:1007.9px;top:0;width:1px;height:208px;background:#d5d5d5"></div></div><!--/GRID-->
<!--CHARTS--><svg class="abs" style="left:0;top:0" width="1348" height="826" viewBox="0 0 1348 826" font-family="Liberation Sans, sans-serif"><path d="M252.5 219.2 V341.7" stroke="#9a9a9a" stroke-width="1" fill="none"/><path d="M252.0 341.7 H431.9" stroke="#9a9a9a" stroke-width="1" fill="none"/><path d="M248.0 341.7 H252.5" stroke="#9a9a9a" stroke-width="1"/><text x="242.5" y="344.8" text-anchor="end" font-size="12" fill="#222">0</text><path d="M248.0 321.4 H252.5" stroke="#9a9a9a" stroke-width="1"/><text x="242.5" y="324.5" text-anchor="end" font-size="12" fill="#222">1</text><path d="M248.0 301.0 H252.5" stroke="#9a9a9a" stroke-width="1"/><text x="242.5" y="304.1" text-anchor="end" font-size="12" fill="#222">2</text><path d="M248.0 280.7 H252.5" stroke="#9a9a9a" stroke-width="1"/><text x="242.5" y="283.8" text-anchor="end" font-size="12" fill="#222">3</text><path d="M248.0 260.4 H252.5" stroke="#9a9a9a" stroke-width="1"/><text x="242.5" y="263.5" text-anchor="end" font-size="12" fill="#222">4</text><path d="M248.0 240.0 H252.5" stroke="#9a9a9a" stroke-width="1"/><text x="242.5" y="243.1" text-anchor="end" font-size="12" fill="#222">5</text><path d="M248.0 219.7 H252.5" stroke="#9a9a9a" stroke-width="1"/><text x="242.5" y="222.8" text-anchor="end" font-size="12" fill="#222">6</text><path d="M252.5 341.2 V346.2" stroke="#9a9a9a" stroke-width="1"/><path d="M282.4 341.2 V346.2" stroke="#9a9a9a" stroke-width="1"/><path d="M312.3 341.2 V346.2" stroke="#9a9a9a" stroke-width="1"/><path d="M342.2 341.2 V346.2" stroke="#9a9a9a" stroke-width="1"/><path d="M372.1 341.2 V346.2" stroke="#9a9a9a" stroke-width="1"/><path d="M402.0 341.2 V346.2" stroke="#9a9a9a" stroke-width="1"/><path d="M431.9 341.2 V346.2" stroke="#9a9a9a" stroke-width="1"/><rect x="261.30" y="321.27" width="11.60" height="19.53" fill="#2a9fdb" stroke="#1d8cc4" stroke-width="0.8"/><rect x="291.20" y="321.27" width="11.60" height="19.53" fill="#2a9fdb" stroke="#1d8cc4" stroke-width="0.8"/><rect x="291.20" y="300.93" width="11.60" height="19.53" fill="#319a45" stroke="#23853a" stroke-width="0.8"/><rect x="321.10" y="280.60" width="11.60" height="60.20" fill="#2a9fdb" stroke="#1d8cc4" stroke-width="0.8"/><rect x="351.00" y="321.27" width="11.60" height="19.53" fill="#2a9fdb" stroke="#1d8cc4" stroke-width="0.8"/><rect x="351.00" y="239.93" width="11.60" height="80.53" fill="#319a45" stroke="#23853a" stroke-width="0.8"/><rect x="380.90" y="321.27" width="11.60" height="19.53" fill="#2a9fdb" stroke="#1d8cc4" stroke-width="0.8"/><rect x="410.80" y="280.60" width="11.60" height="60.20" fill="#2a9fdb" stroke="#1d8cc4" stroke-width="0.8"/><text x="282.9" y="358.2" text-anchor="end" font-size="12" fill="#222" transform="rotate(-45 282.9 358.2)">Sep 14</text><text x="312.9" y="358.2" text-anchor="end" font-size="12" fill="#222" transform="rotate(-45 312.9 358.2)">Oct 14</text><text x="342.8" y="358.2" text-anchor="end" font-size="12" fill="#222" transform="rotate(-45 342.8 358.2)">Dec 14</text><text x="372.6" y="358.2" text-anchor="end" font-size="12" fill="#222" transform="rotate(-45 372.6 358.2)">Mar 15</text><text x="402.5" y="358.2" text-anchor="end" font-size="12" fill="#222" transform="rotate(-45 402.5 358.2)">Aug 15</text><text x="432.4" y="358.2" text-anchor="end" font-size="12" fill="#222" transform="rotate(-45 432.4 358.2)">Oct 15</text><rect x="442.0" y="286.0" width="8" height="8" rx="1" fill="#2a9fdb"/><text x="457.0" y="293.6" font-size="12.4" fill="#222">Pending</text><rect x="442.0" y="300.0" width="8" height="8" rx="1" fill="#319a45"/><text x="457.0" y="307.6" font-size="12.4" fill="#222">Closed</text><path d="M642.5 219.2 V341.7" stroke="#9a9a9a" stroke-width="1" fill="none"/><path d="M642.0 341.7 H811.7" stroke="#9a9a9a" stroke-width="1" fill="none"/><path d="M638.0 341.7 H642.5" stroke="#9a9a9a" stroke-width="1"/><text x="632.5" y="344.8" text-anchor="end" font-size="12" fill="#222">0</text><path d="M638.0 317.3 H642.5" stroke="#9a9a9a" stroke-width="1"/><text x="632.5" y="320.4" text-anchor="end" font-size="12" fill="#222">20</text><path d="M638.0 292.9 H642.5" stroke="#9a9a9a" stroke-width="1"/><text x="632.5" y="296.0" text-anchor="end" font-size="12" fill="#222">40</text><path d="M638.0 268.5 H642.5" stroke="#9a9a9a" stroke-width="1"/><text x="632.5" y="271.6" text-anchor="end" font-size="12" fill="#222">60</text><path d="M638.0 244.1 H642.5" stroke="#9a9a9a" stroke-width="1"/><text x="632.5" y="247.2" text-anchor="end" font-size="12" fill="#222">80</text><path d="M638.0 219.7 H642.5" stroke="#9a9a9a" stroke-width="1"/><text x="632.5" y="222.8" text-anchor="end" font-size="12" fill="#222">100</text><path d="M642.5 341.2 V346.2" stroke="#9a9a9a" stroke-width="1"/><path d="M670.7 341.2 V346.2" stroke="#9a9a9a" stroke-width="1"/><path d="M698.9 341.2 V346.2" stroke="#9a9a9a" stroke-width="1"/><path d="M727.1 341.2 V346.2" stroke="#9a9a9a" stroke-width="1"/><path d="M755.3 341.2 V346.2" stroke="#9a9a9a" stroke-width="1"/><path d="M783.5 341.2 V346.2" stroke="#9a9a9a" stroke-width="1"/><path d="M811.7 341.2 V346.2" stroke="#9a9a9a" stroke-width="1"/><rect x="765.40" y="219.60" width="5.60" height="121.20" fill="#319a45" stroke="#23853a" stroke-width="0.8"/><rect x="786.00" y="280.60" width="5.60" height="60.20" fill="#2a9fdb" stroke="#1d8cc4" stroke-width="0.8"/><rect x="793.60" y="280.60" width="5.60" height="60.20" fill="#319a45" stroke="#23853a" stroke-width="0.8"/><rect x="801.20" y="280.60" width="5.60" height="60.20" fill="#d7e400" stroke="#c2cd00" stroke-width="0.8"/><text x="672.1" y="358.2" text-anchor="end" font-size="12" fill="#222" transform="rotate(-45 672.1 358.2)">Jan 13</text><text x="700.3" y="358.2" text-anchor="end" font-size="12" fill="#222" transform="rotate(-45 700.3 358.2)">Jun 13</text><text x="728.5" y="358.2" text-anchor="end" font-size="12" fill="#222" transform="rotate(-45 728.5 358.2)">Aug 14</text><text x="756.7" y="358.2" text-anchor="end" font-size="12" fill="#222" transform="rotate(-45 756.7 358.2)">Sep 14</text><text x="784.9" y="358.2" text-anchor="end" font-size="12" fill="#222" transform="rotate(-45 784.9 358.2)">Jan 15</text><text x="813.1" y="358.2" text-anchor="end" font-size="12" fill="#222" transform="rotate(-45 813.1 358.2)">Apr 15</text><rect x="822.4" y="279.0" width="8" height="8" rx="1" fill="#2a9fdb"/><text x="837.4" y="286.6" font-size="12.4" fill="#222">SLA Total</text><rect x="822.4" y="293.0" width="8" height="8" rx="1" fill="#319a45"/><text x="837.4" y="300.6" font-size="12.4" fill="#222">SLA Start</text><rect x="822.4" y="307.0" width="8" height="8" rx="1" fill="#d7e400"/><text x="837.4" y="314.6" font-size="12.4" fill="#222">SLA End</text><path d="M988.0 219.2 V341.7" stroke="#9a9a9a" stroke-width="1" fill="none"/><path d="M987.5 341.7 H1156.8" stroke="#9a9a9a" stroke-width="1" fill="none"/><path d="M983.5 341.7 H988.0" stroke="#9a9a9a" stroke-width="1"/><text x="978.0" y="344.8" text-anchor="end" font-size="12" fill="#222">0</text><path d="M983.5 328.1 H988.0" stroke="#9a9a9a" stroke-width="1"/><text x="978.0" y="331.2" text-anchor="end" font-size="12" fill="#222">0.5</text><path d="M983.5 314.6 H988.0" stroke="#9a9a9a" stroke-width="1"/><text x="978.0" y="317.7" text-anchor="end" font-size="12" fill="#222">1</text><path d="M983.5 301.0 H988.0" stroke="#9a9a9a" stroke-width="1"/><text x="978.0" y="304.1" text-anchor="end" font-size="12" fill="#222">1.5</text><path d="M983.5 287.5 H988.0" stroke="#9a9a9a" stroke-width="1"/><text x="978.0" y="290.6" text-anchor="end" font-size="12" fill="#222">2</text><path d="M983.5 273.9 H988.0" stroke="#9a9a9a" stroke-width="1"/><text x="978.0" y="277.0" text-anchor="end" font-size="12" fill="#222">2.5</text><path d="M983.5 260.4 H988.0" stroke="#9a9a9a" stroke-width="1"/><text x="978.0" y="263.5" text-anchor="end" font-size="12" fill="#222">3</text><path d="M983.5 246.8 H988.0" stroke="#9a9a9a" stroke-width="1"/><text x="978.0" y="249.9" text-anchor="end" font-size="12" fill="#222">3.5</text><path d="M983.5 233.3 H988.0" stroke="#9a9a9a" stroke-width="1"/><text x="978.0" y="236.4" text-anchor="end" font-size="12" fill="#222">4</text><path d="M983.5 219.7 H988.0" stroke="#9a9a9a" stroke-width="1"/><text x="978.0" y="222.8" text-anchor="end" font-size="12" fill="#222">4.5</text><path d="M988.0 341.2 V346.2" stroke="#9a9a9a" stroke-width="1"/><path d="M1016.1 341.2 V346.2" stroke="#9a9a9a" stroke-width="1"/><path d="M1044.3 341.2 V346.2" stroke="#9a9a9a" stroke-width="1"/><path d="M1072.4 341.2 V346.2" stroke="#9a9a9a" stroke-width="1"/><path d="M1100.5 341.2 V346.2" stroke="#9a9a9a" stroke-width="1"/><path d="M1128.7 341.2 V346.2" stroke="#9a9a9a" stroke-width="1"/><path d="M1156.8 341.2 V346.2" stroke="#9a9a9a" stroke-width="1"/><rect x="990.90" y="314.49" width="5.50" height="26.31" fill="#2a9fdb" stroke="#1d8cc4" stroke-width="0.8"/><rect x="998.60" y="314.49" width="5.50" height="26.31" fill="#319a45" stroke="#23853a" stroke-width="0.8"/><rect x="1019.03" y="233.16" width="5.50" height="107.64" fill="#2a9fdb" stroke="#1d8cc4" stroke-width="0.8"/><rect x="1026.73" y="233.16" width="5.50" height="107.64" fill="#319a45" stroke="#23853a" stroke-width="0.8"/><rect x="1047.17" y="314.49" width="5.50" height="26.31" fill="#2a9fdb" stroke="#1d8cc4" stroke-width="0.8"/><rect x="1062.57" y="314.49" width="5.50" height="26.31" fill="#d7e400" stroke="#c2cd00" stroke-width="0.8"/><rect x="1075.30" y="314.49" width="5.50" height="26.31" fill="#2a9fdb" stroke="#1d8cc4" stroke-width="0.8"/><rect x="1090.70" y="314.49" width="5.50" height="26.31" fill="#d7e400" stroke="#c2cd00" stroke-width="0.8"/><rect x="1103.43" y="314.49" width="5.50" height="26.31" fill="#2a9fdb" stroke="#1d8cc4" stroke-width="0.8"/><rect x="1111.13" y="314.49" width="5.50" height="26.31" fill="#319a45" stroke="#23853a" stroke-width="0.8"/><rect x="1131.57" y="314.49" width="5.50" height="26.31" fill="#2a9fdb" stroke="#1d8cc4" stroke-width="0.8"/><rect x="1139.27" y="314.49" width="5.50" height="26.31" fill="#319a45" stroke="#23853a" stroke-width="0.8"/><text x="1017.6" y="358.2" text-anchor="end" font-size="12" fill="#222" transform="rotate(-45 1017.6 358.2)">Jan 08</text><text x="1045.7" y="358.2" text-anchor="end" font-size="12" fill="#222" transform="rotate(-45 1045.7 358.2)">Feb 08</text><text x="1073.8" y="358.2" text-anchor="end" font-size="12" fill="#222" transform="rotate(-45 1073.8 358.2)">Aug 08</text><text x="1102.0" y="358.2" text-anchor="end" font-size="12" fill="#222" transform="rotate(-45 1102.0 358.2)">Oct 08</text><text x="1130.1" y="358.2" text-anchor="end" font-size="12" fill="#222" transform="rotate(-45 1130.1 358.2)">Dec 11</text><text x="1158.2" y="358.2" text-anchor="end" font-size="12" fill="#222" transform="rotate(-45 1158.2 358.2)">Aug 15</text><rect x="1167.0" y="279.0" width="8" height="8" rx="1" fill="#2a9fdb"/><text x="1182.0" y="286.6" font-size="12.4" fill="#222">Open</text><rect x="1167.0" y="293.0" width="8" height="8" rx="1" fill="#319a45"/><text x="1182.0" y="300.6" font-size="12.4" fill="#222">Closed</text><rect x="1167.0" y="307.0" width="8" height="8" rx="1" fill="#d7e400"/><text x="1182.0" y="314.6" font-size="12.4" fill="#222">Pending</text></svg><!--/CHARTS-->
<div id="frameL1" class="abs"></div><div id="frameL2" class="abs"></div>
<div id="frameR" class="abs"></div>
<div id="frameB1" class="abs"></div><div id="frameB2" class="abs"></div>
</body></html>
